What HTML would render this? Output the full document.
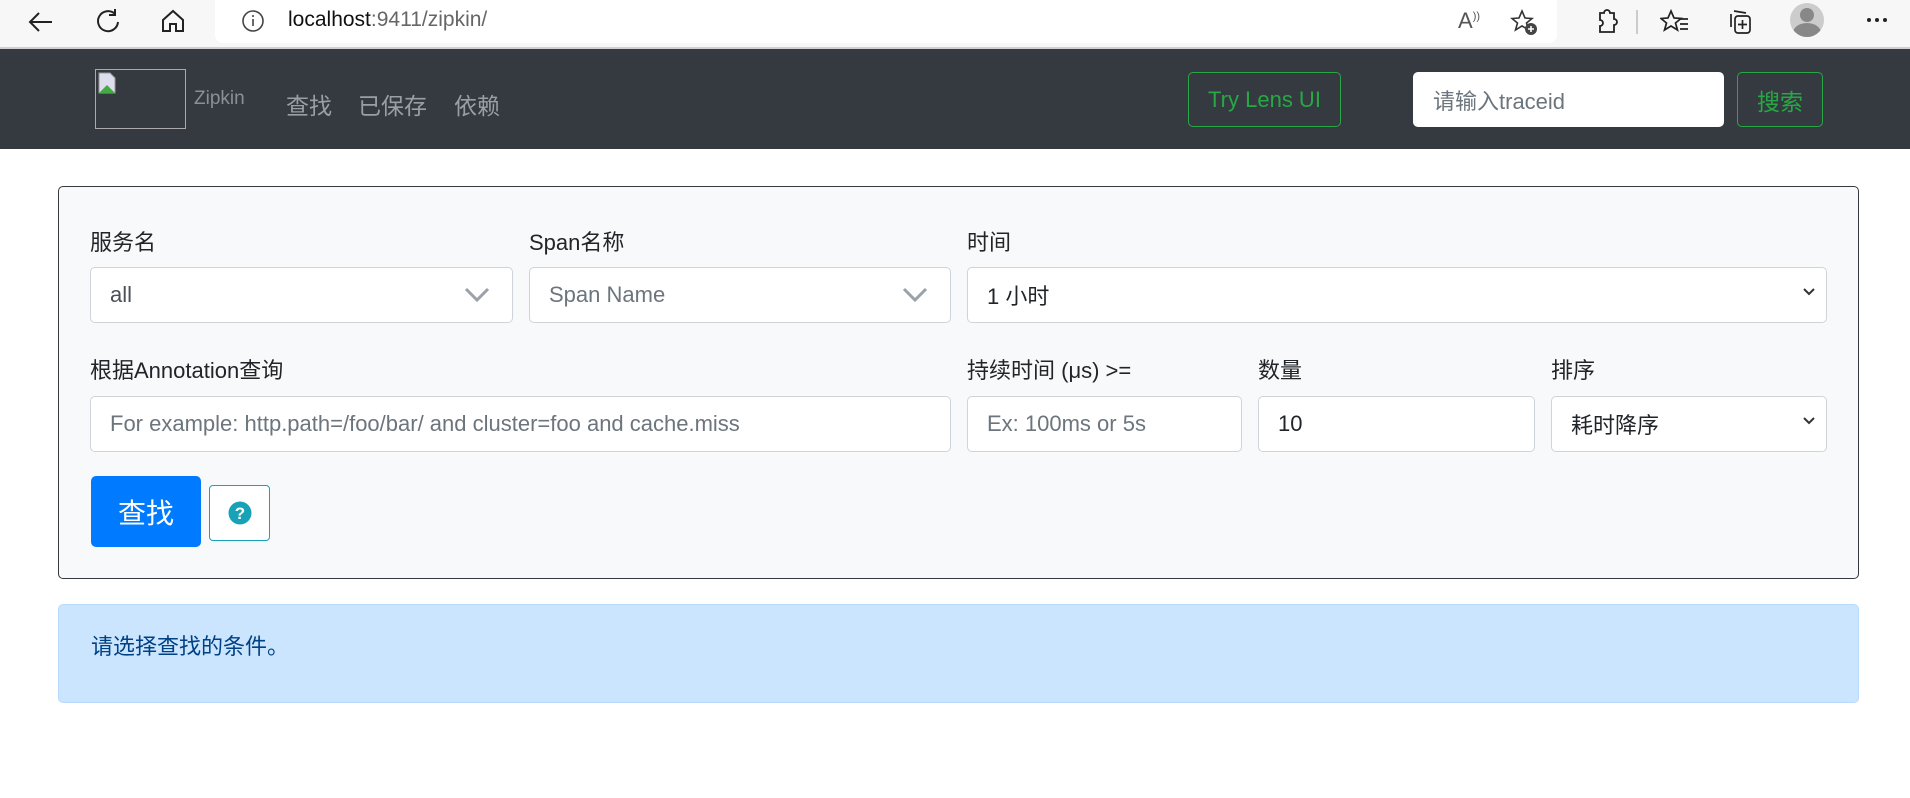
<!DOCTYPE html>
<html><head><meta charset="utf-8"><style>
*{box-sizing:border-box;margin:0;padding:0}
body{width:1910px;height:798px;background:#fff;font-family:"Liberation Sans","Noto Sans CJK SC",sans-serif;position:relative;overflow:hidden;color:#212529}
.a{position:absolute}
.tb{left:0;top:0;width:1910px;height:49px;background:#f7f7f7;border-bottom:2px solid #d0d0d0}
.addr{left:215px;top:0;width:1342px;height:43px;background:#fff;border-radius:0 0 8px 8px}
.nav{left:0;top:49px;width:1910px;height:100px;background:#343a40}
.in{background:#fff;border:1px solid #ced4da;border-radius:5px;font-size:22px;color:#495057;padding-left:19px;display:flex;align-items:center}
.ph{color:#6c757d}
.lb{font-size:22px;color:#212529}
.chev{position:absolute;right:22px;top:50%;margin-top:-8px}
</style></head><body>
<div class="a tb"></div>
<div class="a addr"></div>
<svg class="a" style="left:26px;top:10px" width="30" height="24" viewBox="0 0 30 24"><path d="M26 12H4M13 3L4 12l9 9" stroke="#222" stroke-width="2" fill="none"/></svg>
<svg class="a" style="left:95px;top:8px" width="26" height="26" viewBox="0 0 26 26"><path d="M20 6A10 10 0 1 0 23 14M20 1v6h-6" stroke="#222" stroke-width="2" fill="none"/></svg>
<svg class="a" style="left:160px;top:8px" width="26" height="26" viewBox="0 0 26 26"><path d="M3 12L13 3l10 9v11h-7v-7h-6v7H3z" stroke="#222" stroke-width="2" fill="none"/></svg>
<svg class="a" style="left:240px;top:8px" width="26" height="26" viewBox="0 0 26 26"><circle cx="13" cy="13" r="10" stroke="#444" stroke-width="1.6" fill="none"/><path d="M13 11v7M13 7v2" stroke="#444" stroke-width="1.6"/></svg>
<div class="a" style="left:288px;top:8px;font-size:21px;color:#111">localhost<span style="color:#666">:9411/zipkin/</span></div>
<div class="a" style="left:1458px;top:8px;font-size:22px;color:#555">A<sup style="font-size:11px">))</sup></div>
<svg class="a" style="left:1510px;top:8px" width="28" height="28" viewBox="0 0 28 28"><path d="M12 3l3 7 7 .5-5.5 4.5 2 7-6.5-4-6.5 4 2-7L2 10.5 9 10z" stroke="#333" stroke-width="1.6" fill="none"/><circle cx="21" cy="21" r="6" fill="#444"/><path d="M21 18v6M18 21h6" stroke="#fff" stroke-width="1.6"/></svg>
<svg class="a" style="left:1592px;top:7px" width="28" height="30" viewBox="0 0 28 30"><path d="M8 6h4a3 3 0 0 1 6 0h4v6a3 3 0 0 1 0 6v7H8v-6a3 3 0 0 0 0-6z" stroke="#222" stroke-width="1.8" fill="none"/></svg>
<div class="a" style="left:1636px;top:10px;width:2px;height:24px;background:#ccc"></div>
<svg class="a" style="left:1660px;top:8px" width="30" height="28" viewBox="0 0 30 28"><path d="M11 3l3 7 7 .5-5.5 4.5 2 7-6.5-4-6.5 4 2-7L1 10.5 8 10z" stroke="#222" stroke-width="1.7" fill="none"/><path d="M19 11h9M20 16h8M20 21h8" stroke="#222" stroke-width="1.7"/></svg>
<svg class="a" style="left:1726px;top:7px" width="30" height="30" viewBox="0 0 30 30"><path d="M8 4l12 2" stroke="#222" stroke-width="1.7"/><rect x="9" y="9" width="15" height="17" rx="3" stroke="#222" stroke-width="1.7" fill="none"/><path d="M5 7v13" stroke="#222" stroke-width="1.7"/><path d="M16.5 13v9M12 17.5h9" stroke="#222" stroke-width="1.7"/></svg>
<div class="a" style="left:1790px;top:3px;width:34px;height:34px;border-radius:50%;background:#ccc;overflow:hidden"><div class="a" style="left:10px;top:5px;width:14px;height:14px;border-radius:50%;background:#888"></div><div class="a" style="left:3px;top:20px;width:28px;height:20px;border-radius:50%;background:#888"></div></div>
<svg class="a" style="left:1866px;top:17px" width="22" height="6"><circle cx="3" cy="3" r="2" fill="#222"/><circle cx="11" cy="3" r="2" fill="#222"/><circle cx="19" cy="3" r="2" fill="#222"/></svg>

<div class="a nav"></div>
<div class="a" style="left:95px;top:69px;width:91px;height:60px;border:1px solid #aaa"><svg class="a" style="left:2px;top:2px" width="18" height="22"><path d="M1 1h11l5 5v15H1z" fill="#dde" stroke="#999"/><path d="M1 21l8-8 8 8z" fill="#4a4"/></svg></div>
<div class="a" style="left:194px;top:88px;font-size:19px;color:#8a9097">Zipkin</div>
<div class="a" style="left:286px;top:87px;font-size:23px;color:#9a9fa5">查找</div>
<div class="a" style="left:358px;top:87px;font-size:23px;color:#9a9fa5">已保存</div>
<div class="a" style="left:454px;top:87px;font-size:23px;color:#9a9fa5">依赖</div>
<div class="a" style="left:1188px;top:72px;width:153px;height:55px;border:1px solid #28a745;border-radius:5px;color:#28a745;font-size:22px;display:flex;align-items:center;justify-content:center">Try Lens UI</div>
<div class="a" style="left:1413px;top:72px;width:311px;height:55px;background:#fff;border-radius:5px;font-size:22px;color:#6c757d;padding-left:20px;display:flex;align-items:center">请输入traceid</div>
<div class="a" style="left:1737px;top:72px;width:86px;height:55px;border:1px solid #28a745;border-radius:5px;color:#28a745;font-size:23px;display:flex;align-items:center;justify-content:center">搜索</div>

<div class="a" style="left:58px;top:186px;width:1801px;height:393px;background:#f8f9fa;border:1px solid #343a40;border-radius:5px"></div>
<div class="a lb" style="left:90px;top:225px">服务名</div>
<div class="a lb" style="left:529px;top:225px">Span名称</div>
<div class="a lb" style="left:967px;top:225px">时间</div>
<div class="a in" style="left:90px;top:267px;width:423px;height:56px">all<svg class="chev" width="26" height="16"><path d="M2 2l11 11L24 2" stroke="#9aa1a8" stroke-width="3" fill="none"/></svg></div>
<div class="a in ph" style="left:529px;top:267px;width:422px;height:56px">Span Name<svg class="chev" width="26" height="16"><path d="M2 2l11 11L24 2" stroke="#9aa1a8" stroke-width="3" fill="none"/></svg></div>
<div class="a in" style="left:967px;top:267px;width:860px;height:56px;color:#212529">1 小时<svg class="chev" style="right:10px" width="14" height="10"><path d="M2 2l5 5 5-5" stroke="#333" stroke-width="2" fill="none"/></svg></div>
<div class="a lb" style="left:90px;top:353px">根据Annotation查询</div>
<div class="a lb" style="left:967px;top:353px">持续时间 (μs) &gt;=</div>
<div class="a lb" style="left:1258px;top:353px">数量</div>
<div class="a lb" style="left:1551px;top:353px">排序</div>
<div class="a in ph" style="left:90px;top:396px;width:861px;height:56px">For example: http.path=/foo/bar/ and cluster=foo and cache.miss</div>
<div class="a in ph" style="left:967px;top:396px;width:275px;height:56px">Ex: 100ms or 5s</div>
<div class="a in" style="left:1258px;top:396px;width:277px;height:56px;color:#212529">10</div>
<div class="a in" style="left:1551px;top:396px;width:276px;height:56px;color:#212529">耗时降序<svg class="chev" style="right:10px" width="14" height="10"><path d="M2 2l5 5 5-5" stroke="#333" stroke-width="2" fill="none"/></svg></div>
<div class="a" style="left:91px;top:476px;width:110px;height:71px;background:#007bff;border-radius:5px;color:#fff;font-size:28px;display:flex;align-items:center;justify-content:center">查找</div>
<div class="a" style="left:209px;top:485px;width:61px;height:56px;border:1px solid #17a2b8;border-radius:4px;background:#fff;display:flex;align-items:center;justify-content:center"><svg width="24" height="24" viewBox="0 0 24 24"><circle cx="12" cy="12" r="11.5" fill="#17a2b8"/><text x="12" y="18" text-anchor="middle" font-size="17" font-weight="bold" fill="#fff" font-family="Liberation Sans">?</text></svg></div>

<div class="a" style="left:58px;top:604px;width:1801px;height:99px;background:#cce5ff;border:1px solid #b8daff;border-radius:5px"></div>
<div class="a" style="left:91px;top:629px;font-size:22px;color:#004085">请选择查找的条件。</div>
</body></html>
